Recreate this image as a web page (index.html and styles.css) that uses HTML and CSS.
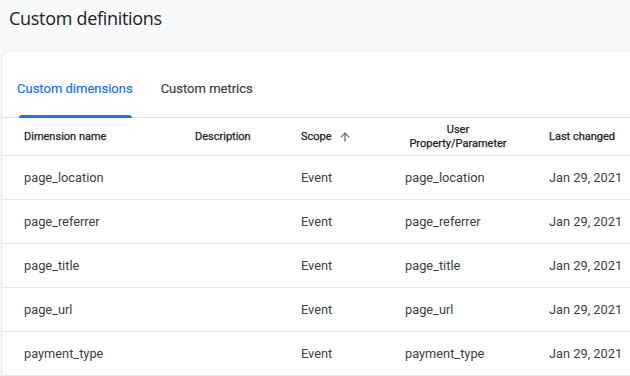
FILE: index.html
```html
<!DOCTYPE html>
<html lang="en">
<head>
  <meta charset="UTF-8" />
  <title>Custom definitions</title>
  <link rel="stylesheet" href="styles.css">
</head>
<body>
  <h1 class="page-title">Custom definitions</h1>

  <div class="panel">
    <div class="tabs">
      <div class="tab active">Custom dimensions</div>
      <div class="tab">Custom metrics</div>
    </div>

    <div class="table">
      <div class="row head">
        <div>Dimension name</div>
        <div>Description</div>
        <div class="sorted">Scope
          <svg viewBox="0 0 24 24" width="14" height="14"><path d="M4 12l1.41 1.41L11 7.83V20h2V7.83l5.58 5.59L20 12l-8-8-8 8z" fill="#5f6368"/></svg>
        </div>
        <div class="center">User<br>Property/Parameter</div>
        <div>Last changed</div>
      </div>

      <div class="row">
        <div>page_location</div><div></div><div>Event</div><div>page_location</div><div>Jan 29, 2021</div>
      </div>
      <div class="row">
        <div>page_referrer</div><div></div><div>Event</div><div>page_referrer</div><div>Jan 29, 2021</div>
      </div>
      <div class="row">
        <div>page_title</div><div></div><div>Event</div><div>page_title</div><div>Jan 29, 2021</div>
      </div>
      <div class="row">
        <div>page_url</div><div></div><div>Event</div><div>page_url</div><div>Jan 29, 2021</div>
      </div>
      <div class="row">
        <div>payment_type</div><div></div><div>Event</div><div>payment_type</div><div>Jan 29, 2021</div>
      </div>
    </div>
  </div>
</body>
</html>
```

FILE: styles.css
```css
body {
  margin: 0;
  font-family: Roboto, 'Liberation Sans', sans-serif;
  background: #f8f9fa;
  color: #3c4043;
  overflow: hidden;
}

.page-title {
  margin: 0;
  padding: 6px 0 0 9px;
  height: 47px;
  box-sizing: border-box;
  font-size: 18px;
  font-weight: 400;
  color: #202124;
  font-family: 'Open Sans', Roboto, sans-serif;
  letter-spacing: -0.3px;
}

.panel {
  margin-left: 2px;
  margin-top: 5px;
  width: 700px;
  background: #fff;
  border-radius: 8px 0 0 0;
  box-shadow: -1px 0 0 #e8eaed, 0 -1px 0 #f1f3f4;
}

.tabs {
  display: flex;
  height: 66px;
  padding-left: 15px;
  border-bottom: 1px solid #e0e0e0;
  box-sizing: border-box;
}

.tab {
  position: relative;
  display: flex;
  align-items: center;
  padding: 7px 0 0 0;
  margin-right: 28px;
  font-size: 13px;
  font-weight: 400;
  color: #3c4043;
  -webkit-text-stroke: 0.2px currentColor;
}

.tab.active {
  color: #1a73e8;
}

.tab.active::after {
  content: "";
  position: absolute;
  left: 2px;
  right: 1px;
  bottom: -1px;
  height: 3px;
  background: #1a73e8;
  border-radius: 3px 3px 0 0;
}

.row {
  display: grid;
  grid-template-columns: 171px 106px 104px 144px 1fr;
  align-items: center;
  height: 44px;
  box-sizing: border-box;
  padding-left: 22px;
  border-bottom: 1px solid #e6e6e6;
  font-size: 12.8px;
  color: #3c4043;
}

.row.head {
  height: 38px;
  font-size: 11px;
  font-weight: 400;
  color: #202124;
  line-height: 14px;
  -webkit-text-stroke: 0.25px currentColor;
}

.sorted {
  display: flex;
  align-items: center;
  gap: 6px;
}

.center {
  width: 106px;
  text-align: center;
}
```
